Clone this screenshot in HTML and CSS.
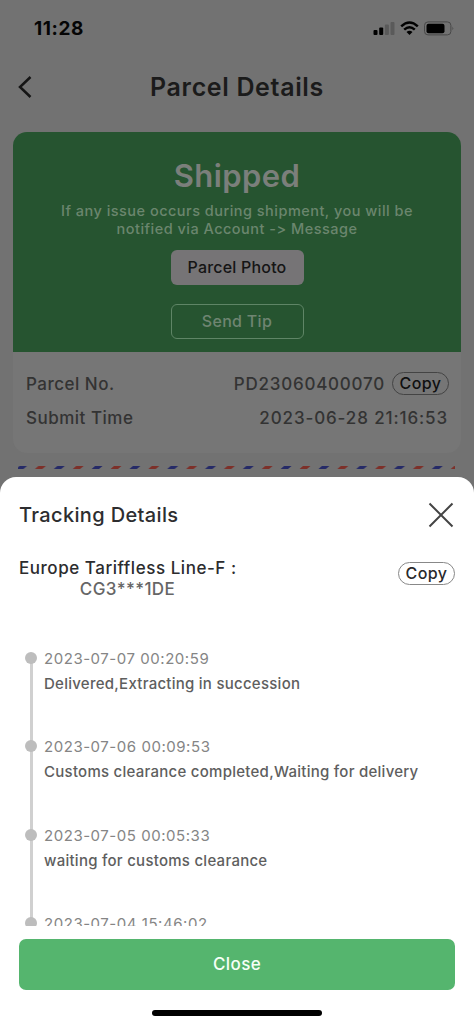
FILE: index.html
```html
<!DOCTYPE html>
<html lang="en">
<head>
<meta charset="utf-8">
<title>Parcel Details</title>
<link rel="stylesheet" href="styles.css">
</head>
<body>
<div class="screen">
  <div class="status">
    <span class="clock">11:28</span>
    <svg class="status-icons" width="84" height="18" viewBox="0 0 84 18">
      <rect x="1.500" y="10" width="4" height="5" rx="1"/>
      <rect x="7.200" y="7.500" width="4" height="7.500" rx="1"/>
      <rect class="dim" x="12.900" y="4.500" width="4" height="10.500" rx="1"/>
      <rect class="dim" x="18.500" y="2" width="4" height="13" rx="1"/>
      <g class="wifi"><path d="M29.200 6.400Q37.500-1.400 45.800 6.400"/><path d="M32.200 9.600Q37.500 4.800 42.800 9.600"/></g>
      <path d="M34.500 12Q37.500 9.600 40.500 12L37.500 15Z"/>
      <rect class="battery" x="52.500" y="1.900" width="26.400" height="13" rx="3.500"/>
      <rect x="54.500" y="3.700" width="18" height="9.500" rx="2"/>
      <path class="tip" d="M80.500 6.500Q82.200 8.400 80.500 10.300Z"/>
    </svg>
  </div>
  <header class="header">
    <svg class="back" width="14" height="24" viewBox="0 0 14 24"><path d="M12.500 2 2 12 12.500 22"/></svg>
    <h1 class="title">Parcel Details</h1>
  </header>
  <section class="card">
    <div class="hero">
      <h2 class="state">Shipped</h2>
      <p class="note">If any issue occurs during shipment, you will be<br>notified via Account -&gt; Message</p>
      <button class="btn photo">Parcel Photo</button>
      <button class="btn tipbtn">Send Tip</button>
    </div>
    <div class="row first"><span class="label">Parcel No.</span><span class="number">PD23060400070</span><button class="copy">Copy</button></div>
    <div class="row"><span class="label">Submit Time</span><span class="submitted">2023-06-28 21:16:53</span></div>
  </section>
  <svg class="airmail" width="437" height="4" viewBox="0 0 437 4">
    <defs><pattern id="stripes" x="-2.500" width="37.800" height="4" patternUnits="userSpaceOnUse">
      <path class="blue" d="M4 0H11.500L8 3H.5Z"/><path class="red" d="M22.900 0H30.400L26.900 3H19.400Z"/>
    </pattern></defs>
    <rect width="437" height="4" fill="url(#stripes)"/>
  </svg>
  <section class="sheet">
    <div class="sheet-head">
      <h2 class="sheet-title">Tracking Details</h2>
      <svg class="x" width="26" height="26" viewBox="0 0 26 26"><path d="M1.500 1.500 24.500 24.500M24.500 1.500 1.500 24.500"/></svg>
    </div>
    <div class="line">
      <div class="line-info"><div class="line-name">Europe Tariffless Line-F :</div><div class="line-code">CG3***1DE</div></div>
      <button class="copy">Copy</button>
    </div>
    <ol class="events">
      <li class="event"><time>2023-07-07 00:20:59</time><p>Delivered,Extracting in succession</p></li>
      <li class="event"><time>2023-07-06 00:09:53</time><p>Customs clearance completed,Waiting for delivery</p></li>
      <li class="event"><time>2023-07-05 00:05:33</time><p>waiting for customs clearance</p></li>
      <li class="event"><time>2023-07-04 15:46:02</time></li>
    </ol>
    <button class="close">Close</button>
    <div class="home"></div>
  </section>
</div>
</body>
</html>
```
FILE: styles.css
```css
* { box-sizing: border-box; margin: 0; padding: 0; }
body { font-family: Inter, "Liberation Sans", sans-serif; font-weight: 500; }
button { font: inherit; border: 0; background: none; }
svg { display: block; flex: none; }
.screen { width: 474px; height: 1025px; overflow: hidden; background: #727272; display: flex; flex-direction: column; white-space: nowrap; }
.status { height: 56px; display: flex; justify-content: space-between; padding: 18px 18px 0 34px; }
.clock { font-size: 19px; line-height: 21px; font-weight: 700; letter-spacing: .6px; color: #050505; }
.status-icons { margin-top: 2px; }
.dim { fill: #5a5a5a; }
.wifi { fill: none; stroke: #000; stroke-width: 2.500; }
.battery { fill: none; stroke: #484848; stroke-width: 1; }
.tip { fill: #444; }
.header { height: 76px; display: grid; grid-template-columns: 14px 1fr 14px; padding: 0 18px; align-items: start; }
.back { margin-top: 19px; fill: none; stroke: #151515; stroke-width: 2.500; }
.title { margin-top: 16px; text-align: center; font-size: 25px; line-height: 30px; font-weight: 600; letter-spacing: .65px; color: #1b1b1b; }
.card { width: 448px; height: 321px; margin-left: 13px; border-radius: 14px; overflow: hidden; background: #767676; flex: none; }
.hero { height: 220px; background: #265430; display: flex; flex-direction: column; align-items: center; padding-top: 25px; }
.state { font-size: 31px; line-height: 38px; font-weight: 600; letter-spacing: .4px; color: #7b7f7b; }
.note { margin-top: 7px; text-align: center; font-size: 14.500px; line-height: 18px; letter-spacing: .48px; color: #6b866e; }
.btn { width: 133px; height: 35px; border-radius: 6px; font-size: 16px; line-height: 19px; letter-spacing: .2px; flex: none; padding-bottom: 1px; }
.photo { margin-top: 12px; background: #767476; color: #151515; }
.tipbtn { margin-top: 19px; border: 1px solid #5f8566; color: #6f8572; letter-spacing: .3px; }
.row { display: flex; align-items: center; height: 34px; padding: 0 13px; font-size: 17px; color: #333; }
.first { margin-top: 15px; }
.label { letter-spacing: .5px; }
.number, .submitted { margin-left: auto; }
.number { letter-spacing: .78px; }
.submitted { letter-spacing: .88px; }
.copy { width: 57px; height: 23px; margin-left: 7px; border: 1px solid #444; border-radius: 12px; font-size: 16px; line-height: 20px; letter-spacing: .4px; color: #101010; flex: none; padding-bottom: 1px; }
.row .copy { margin-right: -1px; margin-bottom: 2px; }
.airmail { margin: 13px 0 0 18px; }
.blue { fill: #252a67; }
.red { fill: #7d3029; }
.sheet { margin-top: 7px; height: 548px; flex: none; background: #fff; border-radius: 16px 16px 0 0; padding: 0 19px; display: flex; flex-direction: column; }
.sheet-head { height: 76px; display: flex; align-items: center; justify-content: space-between; padding-right: 1px; }
.sheet-title { font-size: 20px; font-weight: 500; letter-spacing: .36px; color: #2d2d2f; }
.x { fill: none; stroke: #444; stroke-width: 2; }
.line { height: 96px; display: flex; justify-content: space-between; padding-top: 5px; }
.line .copy { margin-top: 4px; border-color: #888; color: #29292b; }
.line-info { width: 217px; font-size: 17px; line-height: 21px; text-align: center; letter-spacing: .4px; }
.line-name { letter-spacing: .54px; color: #2c2c2e; }
.line-code { color: #666; }
.events { height: 277px; list-style: none; overflow: hidden; margin-left: 6px; }
.event { height: 88.300px; display: grid; grid-template: 25px 1fr / 13px 1fr; column-gap: 6px; position: relative; }
.event::before { content: ""; width: 12px; height: 12px; border-radius: 50%; background: #bdbdbd; margin-top: 3px; grid-area: 1 / 1; z-index: 1; }
.event::after { content: ""; position: absolute; left: 5px; top: 9px; width: 2.500px; height: 89px; background: #d0d0d0; }
.event time { grid-area: 1 / 2; font-size: 15px; line-height: 19px; font-weight: 400; letter-spacing: .54px; color: #858585; }
.event p { grid-area: 2 / 2; font-size: 15px; line-height: 19px; letter-spacing: .26px; color: #5e5e5e; }
.close { margin-top: 13px; height: 51px; border-radius: 7px; background: #55b56e; color: #f5fff7; font-size: 17px; letter-spacing: .4px; flex: none; padding-bottom: 1px; }
.home { width: 170px; height: 6px; border-radius: 3px; background: #000; margin: 20px 0 0 133px; }
```
